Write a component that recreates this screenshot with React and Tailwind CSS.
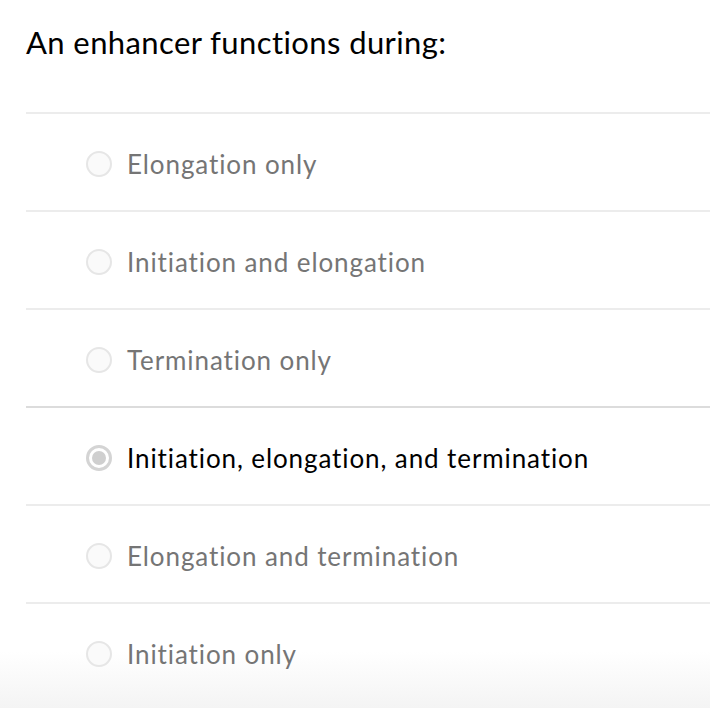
export default function App() {
  const options = [
    { label: "Elongation only", selected: false },
    { label: "Initiation and elongation", selected: false },
    { label: "Termination only", selected: false },
    { label: "Initiation, elongation, and termination", selected: true },
    { label: "Elongation and termination", selected: false },
    { label: "Initiation only", selected: false },
  ];
  return (
    <div className="w-[710px] h-[708px] overflow-hidden bg-gradient-to-b from-white from-[92%] to-[#f4f4f4] font-['Lato',sans-serif]">
      <div className="pl-[26px] pt-[23px] h-[112px]">
        <h1 className="text-[31px] leading-[38px] tracking-[0.4px] text-black">An enhancer functions during:</h1>
      </div>
      <div className="ml-[26px]">
        {options.map((o, i) => (
          <div
            key={i}
            className={`h-[98px] border-t-2 ${i === 3 ? "border-[#dcdcdc]" : "border-[#ececec]"} flex items-center pt-[4px] pl-[60px] gap-[15px]`}
          >
            {o.selected ? (
              <div className="w-[26px] h-[26px] rounded-full border-[3px] border-[#d4d4d4] bg-white flex items-center justify-center">
                <div className="w-[14px] h-[14px] rounded-full bg-[#cfcfcf]" />
              </div>
            ) : (
              <div className="w-[26px] h-[26px] rounded-full border-2 border-[#e6e6e6] bg-[#fafafa]" />
            )}
            <span className={`text-[26px] leading-[32px] tracking-[0.9px] ${o.selected ? "text-black" : "text-[#757575]"}`}>
              {o.label}
            </span>
          </div>
        ))}
      </div>
    </div>
  );
}
